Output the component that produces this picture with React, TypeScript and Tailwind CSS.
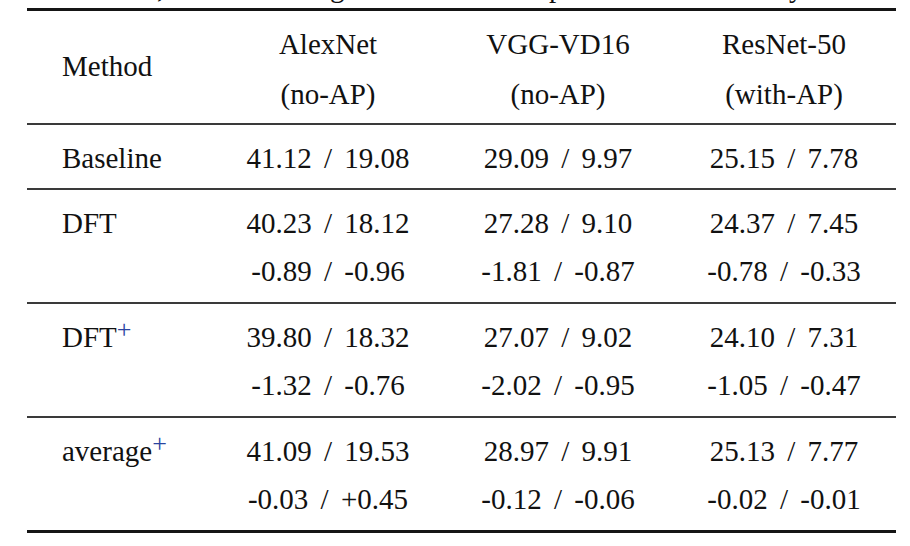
import React from "react";

const font = { fontFamily: '"Liberation Serif", "Times New Roman", serif' };

type Row = { name: React.ReactNode; lines: string[][] };

const Plus = () => (
  <span className="relative -top-[9px] text-[26px] leading-none text-[#2a44a0]">+</span>
);

const rows: Row[] = [
  { name: "Baseline", lines: [["41.12 / 19.08", "29.09 / 9.97", "25.15 / 7.78"]] },
  {
    name: "DFT",
    lines: [
      ["40.23 / 18.12", "27.28 / 9.10", "24.37 / 7.45"],
      ["-0.89 / -0.96", "-1.81 / -0.87", "-0.78 / -0.33"],
    ],
  },
  {
    name: (
      <>
        DFT<Plus />
      </>
    ),
    lines: [
      ["39.80 / 18.32", "27.07 / 9.02", "24.10 / 7.31"],
      ["-1.32 / -0.76", "-2.02 / -0.95", "-1.05 / -0.47"],
    ],
  },
  {
    name: (
      <>
        average<Plus />
      </>
    ),
    lines: [
      ["41.09 / 19.53", "28.97 / 9.91", "25.13 / 7.77"],
      ["-0.03 / +0.45", "-0.12 / -0.06", "-0.02 / -0.01"],
    ],
  },
];

function ThinRule() {
  return <div className="h-[2px] bg-[#3a3a3a]" />;
}

export default function App() {
  return (
    <div className="w-[910px] h-[546px] bg-white text-[#111] overflow-hidden" style={font}>
      {/* clipped caption line above the table */}
      <div className="h-[8px] overflow-hidden">
        <div className="-mt-[37px] flex text-[29px] leading-[48px] whitespace-pre">
          <span className="w-[157px] shrink-0"></span>
          <span className="w-[173px] shrink-0">,</span>
          <span className="w-[219px] shrink-0">g</span>
          <span className="w-[240px] shrink-0">p</span>
          <span className="shrink-0">y</span>
        </div>
      </div>

      <div className="ml-[27px] w-[869px] text-[29px]">
        <div className="h-[3px] bg-[#151515]" />

        {/* header */}
        <div className="grid grid-cols-[185px_232px_228px_224px] h-[112px]">
          <div className="flex items-center pl-[35px]">Method</div>
          {[
            ["AlexNet", "(no-AP)"],
            ["VGG-VD16", "(no-AP)"],
            ["ResNet-50", "(with-AP)"],
          ].map((h, i) => (
            <div key={i} className="flex flex-col items-center pt-[8px] leading-[50px]">
              <span>{h[0]}</span>
              <span>{h[1]}</span>
            </div>
          ))}
        </div>
        <ThinRule />

        {rows.map((r, ri) => (
          <React.Fragment key={ri}>
            <div
              className={
                "grid grid-cols-[185px_232px_228px_224px] pt-[9px] leading-[48px] " +
                (r.lines.length === 1 ? "h-[63px]" : "h-[112px]")
              }
            >
              <div className="pl-[35px] whitespace-nowrap">{r.name}</div>
              {[0, 1, 2].map((c) => (
                <div key={c} className="flex flex-col items-center whitespace-pre [word-spacing:5px]">
                  {r.lines.map((l, li) => (
                    <span key={li}>{l[c]}</span>
                  ))}
                </div>
              ))}
            </div>
            {ri < rows.length - 1 ? <ThinRule /> : <div className="h-[3px] bg-[#151515]" />}
          </React.Fragment>
        ))}
      </div>
    </div>
  );
}
